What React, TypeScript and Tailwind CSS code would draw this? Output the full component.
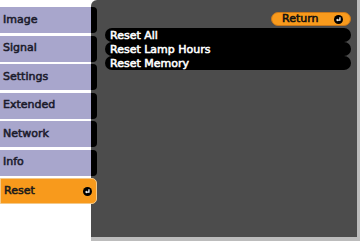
import React from "react";

const tabs = ["Image", "Signal", "Settings", "Extended", "Network", "Info", "Reset"];
const items = ["Reset All", "Reset Lamp Hours", "Reset Memory"];

function EnterIcon({ size = 9, bg = "#000", fg = "#fff" }: { size?: number; bg?: string; fg?: string }) {
  return (
    <svg width={size} height={size} viewBox="0 0 10 10">
      <circle cx="5" cy="5" r="5" fill={bg} />
      <path d="M6.6 2.4 V5.6 H3.4" stroke={fg} strokeWidth="1.4" fill="none" />
      <path d="M2.2 5.6 L4.2 4 V7.2 Z" fill={fg} />
    </svg>
  );
}

export default function App() {
  return (
    <div
      className="w-[360px] h-[241px] bg-white flex overflow-hidden"
      style={{ fontFamily: '"DejaVu Sans", Verdana, sans-serif' }}
    >
      {/* Menu tabs */}
      <div className="w-[91px] shrink-0 pt-[7px] flex flex-col gap-[2.5px] relative z-10">
        {tabs.map((t) =>
          t === "Reset" ? (
            <div
              key={t}
              className="w-[97px] h-[26px] bg-[#f89a1c] border border-[#f3c98a] rounded-r-[5px] flex items-center justify-between pl-[3px] pr-[4px] text-[11px] [-webkit-text-stroke:0.55px_#1a1a1a] text-[#1a1a1a]"
            >
              <span>{t}</span>
              <EnterIcon size={9} />
            </div>
          ) : (
            <div
              key={t}
              className="h-[26px] bg-[#a8a6cc] flex items-center pl-[3px] text-[11px] [-webkit-text-stroke:0.55px_#1c1c2c] text-[#1c1c2c]"
            >
              {t}
            </div>
          )
        )}
      </div>

      {/* Panel */}
      <div className="flex-1 h-[241px] bg-[#4c4c4c] rounded-tl-[6px] border-r-[3px] border-b-[4px] border-[#bcbcbc] flex">
        <div className="w-[6px] shrink-0 pt-[7px] flex flex-col gap-[2.5px]">
          {tabs.slice(0, 6).map((t) => (
            <div key={t} className="h-[26px] bg-black rounded-r-[4px]" />
          ))}
        </div>
        <div className="flex-1 pt-[12px] pl-[8px] pr-[6px] flex flex-col">
          <div className="flex justify-end">
            <div className="w-[80px] h-[14px] bg-[#f89a1c] border border-[#c8771a] rounded-full flex items-center justify-between pl-[10px] pr-[7px] text-[11px] [-webkit-text-stroke:0.55px_#111] text-[#111]">
              <span>Return</span>
              <EnterIcon size={9} />
            </div>
          </div>
          <div className="flex flex-col mt-[2px]">
            {items.map((it) => (
              <div
                key={it}
                className="h-[14px] bg-black rounded-full flex items-center pl-[5px] text-[11px] [-webkit-text-stroke:0.55px_#fff] text-white leading-none"
              >
                {it}
              </div>
            ))}
          </div>
        </div>
      </div>
    </div>
  );
}
